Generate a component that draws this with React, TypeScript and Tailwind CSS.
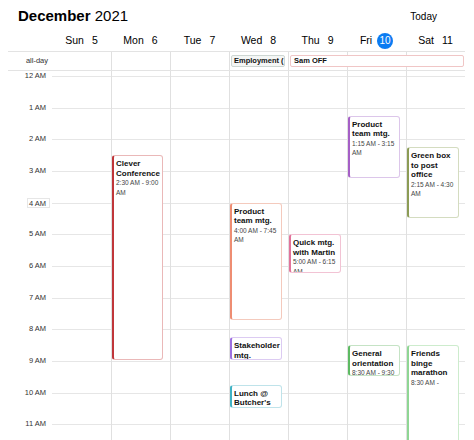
import React from 'react'

const HOUR = 31.667

const DAYS = [
  { name: 'Sun', num: 5 },
  { name: 'Mon', num: 6 },
  { name: 'Tue', num: 7 },
  { name: 'Wed', num: 8 },
  { name: 'Thu', num: 9 },
  { name: 'Fri', num: 10, today: true },
  { name: 'Sat', num: 11 },
]

const HOURS = ['12 AM', '1 AM', '2 AM', '3 AM', '4 AM', '5 AM', '6 AM', '7 AM', '8 AM', '9 AM', '10 AM', '11 AM']

type Ev = {
  day: number
  start: number
  end: number
  title: string
  time?: string
  cls: string
  w?: number
}

const EVENTS: Ev[] = [
  { day: 1, start: 2.5, end: 9, title: 'Clever Conference', time: '2:30 AM - 9:00 AM', cls: 'border-[#eab8b8] border-l-[#c0363a]', w: 51 },
  { day: 3, start: 4, end: 7.75, title: 'Product team mtg.', time: '4:00 AM - 7:45 AM', cls: 'border-[#f4cabd] border-l-[#ee8d72]' },
  { day: 3, start: 8.25, end: 9, title: 'Stakeholder mtg.', cls: 'border-[#dccbf2] border-l-[#9d6fe0]' },
  { day: 3, start: 9.75, end: 10.5, title: "Lunch @ Butcher's", cls: 'border-[#bfe3ea] border-l-[#3fb2c4]' },
  { day: 4, start: 5, end: 6.25, title: 'Quick mtg. with Martin', time: '5:00 AM - 6:15 AM', cls: 'border-[#f2c3d4] border-l-[#e2739b]' },
  { day: 5, start: 1.25, end: 3.25, title: 'Product team mtg.', time: '1:15 AM - 3:15 AM', cls: 'border-[#dcc6ea] border-l-[#a55fc6]' },
  { day: 5, start: 8.5, end: 9.5, title: 'General orientation', time: '8:30 AM - 9:30 AM', cls: 'border-[#c5e3c5] border-l-[#5dba62]' },
  { day: 6, start: 2.25, end: 4.5, title: 'Green box to post office', time: '2:15 AM - 4:30 AM', cls: 'border-[#d4dcc0] border-l-[#8c9c55]' },
  { day: 6, start: 8.5, end: 16, title: 'Friends binge marathon', time: '8:30 AM -', cls: 'border-[#cdeccd] border-l-[#8fd694]' },
]

function EventBox({ ev }: { ev: Ev }) {
  return (
    <div
      className={`absolute left-0 overflow-hidden rounded-[3px] border border-l-2 bg-white pl-[2px] pr-[1px] pt-[3px] ${ev.cls}`}
      style={{ top: 5 + ev.start * HOUR, height: (ev.end - ev.start) * HOUR - 1, width: ev.w ?? 52 }}
    >
      <div className="text-[8px] font-bold leading-[9.5px] text-[#111]">{ev.title}</div>
      {ev.time && <div className="text-[6.5px] leading-[9.5px] text-[#444]">{ev.time}</div>}
    </div>
  )
}

export default function App() {
  return (
    <div className="h-[440px] w-[474px] overflow-hidden bg-white font-['Liberation_Sans',Arial,sans-serif] text-[#222]">
      {/* title */}
      <div className="flex h-[30px] items-center justify-between pl-[18px] pr-[37px] pt-[2px]">
        <div className="text-[15px] text-black">
          <span className="font-semibold">December</span> 2021
        </div>
        <div className="text-[10px] text-black">Today</div>
      </div>

      {/* day header */}
      <div className="flex h-[21px] pl-[52px]">
        {DAYS.map((d) => (
          <div key={d.name} className="flex w-[59px] items-center justify-center gap-[8px] text-[10.5px] text-black">
            <span>{d.name}</span>
            {d.today ? (
              <span className="-ml-[3px] flex h-[16px] w-[16px] items-center justify-center rounded-full bg-[#0b7cf2] text-[10px] text-white">
                {d.num}
              </span>
            ) : (
              <span>{d.num}</span>
            )}
          </div>
        ))}
      </div>

      {/* all-day row */}
      <div className="ml-[8px] grid h-[20px] w-[457px] grid-cols-[44px_repeat(7,59px)] border-y border-[#e3e3e3]">
        <div className="col-start-1 row-start-1 flex items-center justify-end pr-[4px] text-[7.5px] text-[#333]">all-day</div>
        {DAYS.map((d, i) => (
          <div
            key={d.name}
            className={`row-start-1 ${i === 0 ? '' : 'border-l border-[#e0e0e0]'}`}
            style={{ gridColumnStart: i + 2 }}
          />
        ))}
        <div className="col-start-5 row-start-1 mt-[3px] ml-[2px] mr-[3px] h-[12px] overflow-hidden whitespace-nowrap rounded-[2px] border border-[#cdd6d2] bg-[#f4f6f5] pl-[2px] text-[7.5px] font-bold leading-[10px] text-[#111]">
          Employment (
        </div>
        <div className="col-start-6 col-end-9 row-start-1 mt-[3px] ml-[2px] mr-[1px] h-[12px] overflow-hidden whitespace-nowrap rounded-[2px] border border-[#f0c6c6] bg-white pl-[3px] text-[7.5px] font-bold leading-[10px] text-[#111]">
          Sam OFF
        </div>
      </div>

      {/* time grid */}
      <div className="flex">
        <div className="w-[52px] shrink-0">
          {HOURS.map((h) => (
            <div key={h} className="flex h-[31.667px] justify-end pr-[6px]">
              <span
                className={`h-[10px] text-[7.5px] leading-[10px] text-[#333] ${
                  h === '4 AM' ? '-mr-[4px] border border-[#e6e6e6] bg-white pl-[1px] pr-[3px] leading-[8px]' : ''
                }`}
              >
                {h}
              </span>
            </div>
          ))}
        </div>
        {DAYS.map((d, i) => (
          <div key={d.name} className={`relative w-[59px] shrink-0 pt-[5px] ${i === 0 ? '' : 'border-l border-[#e0e0e0]'}`}>
            {HOURS.map((h) => (
              <div key={h} className="h-[31.667px] border-t border-[#e6e6e6]" />
            ))}
            {EVENTS.filter((e) => e.day === i).map((e) => (
              <EventBox key={e.title + e.start} ev={e} />
            ))}
          </div>
        ))}
      </div>
    </div>
  )
}
